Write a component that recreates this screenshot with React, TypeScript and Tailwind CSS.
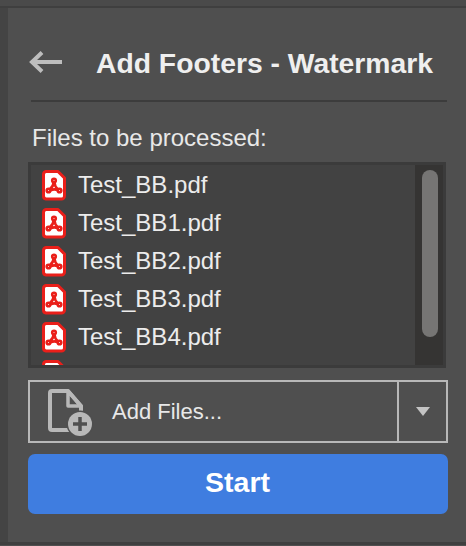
import React from "react";

const FILES = ["Test_BB.pdf", "Test_BB1.pdf", "Test_BB2.pdf", "Test_BB3.pdf", "Test_BB4.pdf", ""];

const PdfIcon = () => (
  <svg width="24" height="31" viewBox="0 0 24 31" className="shrink-0">
    <path d="M4 1.5H16L22.5 8V26A3 3 0 0 1 19.5 29H4A3 3 0 0 1 1.5 26V4.5A3 3 0 0 1 4 1.5Z" fill="#fff" stroke="#ea1f1a" strokeWidth="3" strokeLinejoin="round" />
    <g fill="none" stroke="#ea1f1a" strokeWidth="2.6">
      <circle cx="12" cy="10.5" r="1.8" />
      <circle cx="6.5" cy="20.5" r="1.8" />
      <circle cx="17.5" cy="20.5" r="1.8" />
      <path d="M11.5 12.5C11.5 15.5 10 17.5 8 19M12.5 12.5C12.5 15.5 14 17.5 16 19.5M8.5 20.5C11 19 13 19 15.5 20" />
    </g>
  </svg>
);

export default function App() {
  return (
    <div className="flex flex-col w-[466px] h-[546px] bg-[#4f4f4f] overflow-hidden font-['Liberation_Sans',sans-serif]">
      <div className="h-[8px] shrink-0 bg-[#4a4a4a] border-b-2 border-[#3f3f3f]" />
      <div className="flex flex-1 min-h-0">
        <div className="w-[8px] shrink-0 bg-[#444444]" />
        <div className="flex-1 min-w-0 flex flex-col pl-[20px] pr-[18px]">
          {/* Header */}
          <div className="flex items-center h-[94px] ml-[3px] mr-[1px] border-b-2 border-[#3c3c3c] shrink-0 pt-[18px]">
            <svg width="34" height="24" viewBox="0 0 34 24" className="shrink-0 -ml-[2px] -mt-[2px]">
              <path d="M33 12H3M13 2.5L3 12L13 21.5" fill="none" stroke="#bdbdbd" strokeWidth="4" />
            </svg>
            <span className="ml-[33px] text-[28.3px] font-bold text-[#efefef] whitespace-nowrap">Add Footers - Watermark</span>
          </div>

          <div className="mt-[21px] ml-[4px] text-[24px] leading-[30px] text-[#e8e8e8]">Files to be processed:</div>

          {/* File list */}
          <div className="mt-[9px] mr-[2px] h-[206px] flex border-[3px] border-[#3b3b3b] bg-[#424242] overflow-hidden shrink-0">
            <div className="flex-1 min-w-0 pl-[11px] pt-[1px]">
              {FILES.map((f, i) => (
                <div key={i} className="flex items-center gap-[12px] h-[38px] shrink-0">
                  <PdfIcon />
                  <span className="text-[24px] text-[#ececec] whitespace-nowrap">{f}</span>
                </div>
              ))}
            </div>
            <div className="w-[28px] shrink-0 bg-[#353433] pt-[5px] pl-[7px]">
              <div className="w-[16px] h-[167px] rounded-full bg-[#767574]" />
            </div>
          </div>

          {/* Add files */}
          <div className="mt-[12px] h-[63px] flex border-2 border-[#b8b8b8] shrink-0">
            <div className="flex-1 flex items-center pl-[18px] border-r-2 border-[#b8b8b8]">
              <svg width="46" height="48" viewBox="0 0 46 48" className="shrink-0">
                <path d="M2 5A2 2 0 0 1 4 3H20L33 18V42H4A2 2 0 0 1 2 40Z" fill="none" stroke="#b8b8b8" strokeWidth="4" strokeLinejoin="round" />
                <path d="M20 3V18H33Z" fill="none" stroke="#b8b8b8" strokeWidth="3.5" strokeLinejoin="round" />
                <circle cx="32" cy="36" r="13.5" fill="#4f4f4f" />
                <circle cx="32" cy="36" r="12" fill="#b8b8b8" />
                <path d="M32 29V43M25 36H39" stroke="#4f4f4f" strokeWidth="3.5" />
              </svg>
              <span className="ml-[18px] text-[22px] text-[#e8e8e8]">Add Files...</span>
            </div>
            <div className="w-[47px] shrink-0 flex items-center justify-center">
              <svg width="14" height="9" viewBox="0 0 14 9">
                <path d="M0 0H14L7 9Z" fill="#c4c4c4" />
              </svg>
            </div>
          </div>

          {/* Start */}
          <button className="mt-[11px] h-[60px] shrink-0 rounded-[7px] bg-[#3f7de0] pb-[3px] pr-[1px] text-white text-[28.5px] font-bold">Start</button>
        </div>
      </div>
      <div className="h-[3px] shrink-0 bg-[#3f3f3f] mb-[1px]" />
    </div>
  );
}
